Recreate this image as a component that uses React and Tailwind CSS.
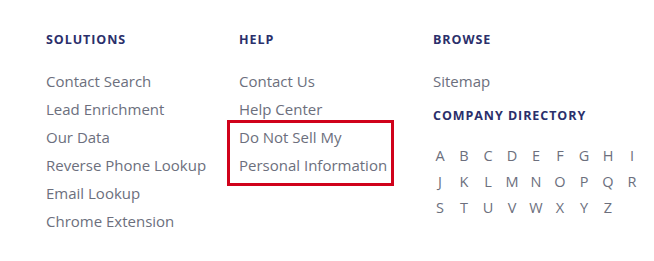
import React from 'react';

const solutions = ['Contact Search', 'Lead Enrichment', 'Our Data', 'Reverse Phone Lookup', 'Email Lookup', 'Chrome Extension'];
const letters = 'ABCDEFGHIJKLMNOPQRSTUVWXYZ'.split('');

const Heading = ({ children }) => (
  <h4 className="text-[12.5px] font-bold tracking-[0.075em] uppercase text-[#2b2f6b] leading-[20px]">{children}</h4>
);

const Link = ({ children }) => (
  <a href="#" className="block text-[15px] leading-[28px] text-[#6c6f7d] whitespace-nowrap">{children}</a>
);

export default function App() {
  return (
    <div className="w-[654px] h-[261px] bg-white" style={{ fontFamily: '"Open Sans", "Liberation Sans", sans-serif' }}>
      <div className="flex pl-[46px] pt-[30px]">
        {/* Solutions */}
        <div className="w-[193px]">
          <Heading>Solutions</Heading>
          <div className="mt-[17px]">
            {solutions.map(s => <Link key={s}>{s}</Link>)}
          </div>
        </div>

        {/* Help */}
        <div className="w-[194px]">
          <Heading>Help</Heading>
          <div className="mt-[17px] relative">
            <Link>Contact Us</Link>
            <Link>Help Center</Link>
            <Link>Do Not Sell My</Link>
            <Link>Personal Information</Link>
            <div className="absolute left-[-12px] top-[53px] w-[167px] h-[66px] border-[3px] border-[#d0021b]" />
          </div>
        </div>

        {/* Browse */}
        <div className="w-[220px]">
          <Heading>Browse</Heading>
          <div className="mt-[17px]">
            <Link>Sitemap</Link>
          </div>
          <div className="mt-[11px]">
            <Heading>Company Directory</Heading>
          </div>
          <div className="mt-[17px] grid grid-cols-[repeat(9,24px)] -ml-[1px]">
            {letters.map(l => (
              <a key={l} href="#" className="text-[14.5px] leading-[26px] text-[#6c6f7d] text-center w-[16px]">{l}</a>
            ))}
          </div>
        </div>
      </div>
    </div>
  );
}
